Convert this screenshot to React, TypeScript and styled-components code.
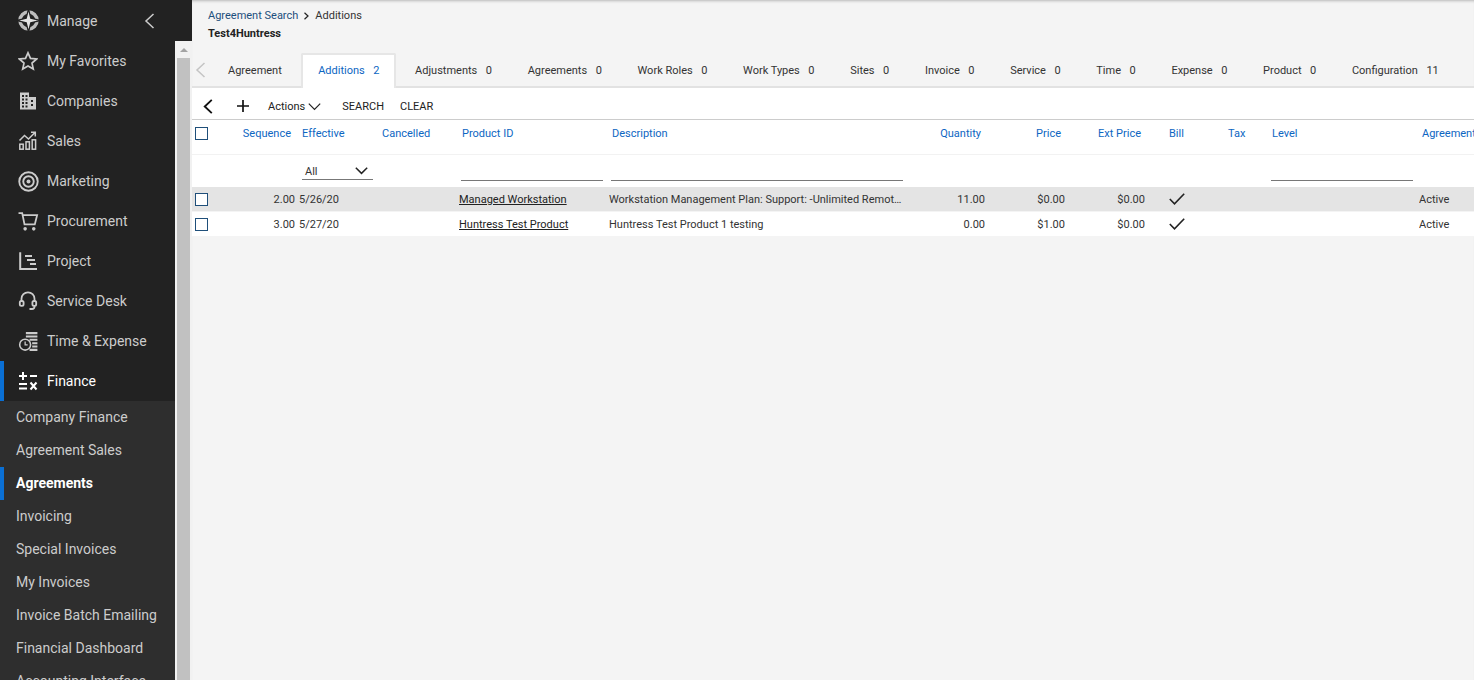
import React from "react"
import styled, { createGlobalStyle } from "styled-components"

const GlobalStyle = createGlobalStyle`
  html, body {
    margin: 0;
    height: 100%;
    overflow: hidden;
    background: #f4f4f4;
    font-family: Roboto, "Liberation Sans", sans-serif;
  }
`

const Page = styled.div`
  display: flex;
  width: 1474px;
  height: 680px;
  overflow: hidden;
`
const Sidebar = styled.aside`
  width: 192px;
  flex: none;
  display: flex;
  flex-direction: column;
  height: 680px;
  overflow: hidden;
`
const ManageBar = styled.div`
  height: 41px;
  flex: none;
  background: #222222;
  display: flex;
  align-items: center;
  justify-content: space-between;
  padding-right: 34px;
`
const SideBody = styled.div`
  flex: 1;
  min-height: 0;
  display: flex;
`
const SideList = styled.nav`
  width: 175px;
  flex: none;
  background: #222222;
  overflow: hidden;
`
const MainItem = styled.div<{ $active?: boolean }>`
  position: relative;
  height: 40px;
  display: flex;
  align-items: center;
  font-size: 14px;
  color: ${(p) => (p.$active ? "#ffffff" : "#cccccc")};
  &::before {
    content: "";
    display: ${(p) => (p.$active ? "block" : "none")};
    position: absolute;
    left: 0;
    top: 0;
    bottom: 0;
    width: 4px;
    background: #0a6fd4;
  }
`
const IconSlot = styled.span`
  width: 47px;
  flex: none;
  display: flex;
  justify-content: center;
  padding-left: 9px;
  box-sizing: border-box;
  svg {
    display: block;
  }
`
const SubList = styled.div`
  background: #2e2e2e;
  padding-bottom: 40px;
`
const SubItem = styled.div<{ $active?: boolean }>`
  position: relative;
  height: 33px;
  line-height: 33px;
  padding-left: 16px;
  font-size: 14px;
  white-space: nowrap;
  color: ${(p) => (p.$active ? "#ffffff" : "#cccccc")};
  font-weight: ${(p) => (p.$active ? 700 : 400)};
  &::before {
    content: "";
    display: ${(p) => (p.$active ? "block" : "none")};
    position: absolute;
    left: 0;
    top: 0;
    bottom: 0;
    width: 4px;
    background: #0a6fd4;
  }
`
const ScrollTrack = styled.div`
  width: 17px;
  flex: none;
  background: #f1f1f1;
  display: flex;
  flex-direction: column;
  align-items: center;
`
const ScrollArrow = styled.div`
  height: 17px;
  flex: none;
  display: flex;
  align-items: center;
  justify-content: center;
  &::after {
    content: "";
    border-left: 4px solid transparent;
    border-right: 4px solid transparent;
    border-bottom: 4px solid #a3a3a3;
  }
`
const ScrollThumb = styled.div`
  width: 13px;
  flex: 1;
  background: #c1c1c1;
`

const Main = styled.main`
  flex: 1;
  min-width: 0;
  background: #f4f4f4;
  box-shadow: inset 0 3px 3px -2px rgba(0, 0, 0, 0.25);
  color: #333333;
  font-size: 11px;
  overflow: hidden;
`
const Crumbs = styled.div`
  height: 54px;
  box-sizing: border-box;
  padding: 9px 0 0 16px;
`
const CrumbLine = styled.div`
  display: flex;
  align-items: center;
  gap: 5px;
  height: 13px;
  line-height: 13px;
`
const CrumbLink = styled.span`
  color: #1d4f7c;
`
const Title = styled.div`
  margin-top: 5px;
  line-height: 13px;
  font-weight: 700;
  color: #222222;
`
const TabBar = styled.div`
  height: 32px;
  display: flex;
  border-bottom: 2px solid #e2e2e2;
  white-space: nowrap;
`
const TabBack = styled.div`
  width: 18.15px;
  flex: none;
  display: flex;
  align-items: center;
  padding-left: 1px;
  box-sizing: border-box;
`
const Tab = styled.div<{ $active?: boolean }>`
  flex: none;
  height: 32px;
  box-sizing: border-box;
  display: flex;
  align-items: center;
  gap: 8.5px;
  padding: 0 17.85px;
  ${(p) =>
    p.$active &&
    `
    height: 35px;
    width: 95px;
    margin: -1px 1.15px 0 1.5px;
    padding: 0 0 2px 15px;
    color: #0d66c2;
    background: #ffffff;
    border: 2px solid #e6e6e6;
    border-bottom: none;
    border-radius: 2px 2px 0 0;
    position: relative;
    z-index: 1;
  `}
`
const Toolbar = styled.div`
  height: 32px;
  box-sizing: border-box;
  background: #ffffff;
  border-bottom: 1px solid #cccccc;
  display: flex;
  align-items: center;
  padding: 5px 0 0 9px;
  color: #222222;
`
const ToolIcon = styled.span<{ $gap: number }>`
  display: flex;
  margin-right: ${(p) => p.$gap}px;
`
const ToolText = styled.span<{ $gap?: number }>`
  display: flex;
  align-items: center;
  gap: 3px;
  margin-right: ${(p) => p.$gap ?? 0}px;
`
const COLS = "47px 60px 80px 80px 150px 300px 80px 80px 80px 76px 44px 150px 120px"
const HeadRow = styled.div`
  display: grid;
  grid-template-columns: ${COLS};
  height: 35px;
  box-sizing: border-box;
  padding-bottom: 8px;
  background: #ffffff;
  border-bottom: 1px solid #f2f2f2;
  align-items: center;
`
const HeadCell = styled.div<{ $right?: boolean; $inset?: number }>`
  color: #0d66c2;
  white-space: nowrap;
  text-align: ${(p) => (p.$right ? "right" : "left")};
  padding: ${(p) => (p.$right ? "0 8px 0 0" : `0 0 0 ${p.$inset ?? 3}px`)};
`
const FilterRow = styled.div`
  display: grid;
  grid-template-columns: ${COLS};
  height: 32px;
  background: #ffffff;
`
const FilterLine = styled.div`
  height: 25px;
  margin: 0 6px 0 2px;
  border-bottom: 1px solid #777777;
`
const FilterSelect = styled.div`
  height: 25px;
  margin: -1px 6px 0 3px;
  border-bottom: 1px solid #777777;
  display: flex;
  align-items: center;
  justify-content: space-between;
  padding: 0 5px 0 3px;
  white-space: nowrap;
  svg {
    margin-top: 7px;
  }
`
const AllLabel = styled.span`
  line-height: 13px;
  margin-top: 9px;
`
const DataRow = styled.div<{ $shade?: boolean }>`
  display: grid;
  grid-template-columns: ${COLS};
  height: 25px;
  box-sizing: border-box;
  align-items: center;
  background: ${(p) => (p.$shade ? "#e4e4e4" : "#ffffff")};
  border-bottom: 1px solid #f4f4f4;
`
const Cell = styled.div<{ $right?: boolean; $inset?: number }>`
  white-space: nowrap;
  overflow: hidden;
  text-overflow: ellipsis;
  text-align: ${(p) => (p.$right ? "right" : "left")};
  padding: ${(p) => (p.$right ? "0 4px 0 0" : `0 6px 0 ${p.$inset ?? 0}px`)};
  display: block;
`
const ProductLink = styled.span`
  color: #222222;
  text-decoration: underline;
`
const CheckBox = styled.span`
  display: block;
  width: 13px;
  height: 13px;
  margin-left: 3px;
  box-sizing: border-box;
  background: #ffffff;
  border: 1.5px solid #1f4f7a;
`
const BillCheck = styled.svg`
  display: block;
`

const Ico = ({ children, w = 20 }: { children: React.ReactNode; w?: number }) => (
  <svg
    width={w}
    height={w}
    viewBox="0 0 20 20"
    fill="none"
    stroke="#cccccc"
    strokeWidth="1.5"
  >
    {children}
  </svg>
)

const ManageIcon = () => (
  <Ico w={23}>
    <circle cx="10" cy="10" r="7.4" strokeWidth="3" stroke="#bdbdbd" />
    <path
      d="M10 0 L12 8 L20 10 L12 12 L10 20 L8 12 L0 10 L8 8 Z"
      fill="#e4e4e4"
      stroke="#222222"
      strokeWidth="1.1"
    />
  </Ico>
)
const StarIcon = () => (
  <Ico>
    <path d="M10 1.8 L12.5 7.4 L18.6 8 L14 12.1 L15.3 18.1 L10 15 L4.7 18.1 L6 12.1 L1.4 8 L7.5 7.4 Z" strokeWidth="1.7" />
  </Ico>
)
const BuildingIcon = () => (
  <Ico>
    <path
      fillRule="evenodd"
      clipRule="evenodd"
      stroke="none"
      fill="#cccccc"
      d="M2 1.5 H11 V6 H18 V18.5 H2 Z M4 4 V6 H6 V4 Z M7.5 4 V6 H9.5 V4 Z M4 7.5 V9.5 H6 V7.5 Z M7.5 7.5 V9.5 H9.5 V7.5 Z M4 11 V13 H6 V11 Z M7.5 11 V13 H9.5 V11 Z M4 14.5 V16.5 H6 V14.5 Z M7.5 14.5 V16.5 H9.5 V14.5 Z M13 9 V11 H15 V9 Z M13 13 V15 H15 V13 Z"
    />
  </Ico>
)
const SalesIcon = () => (
  <Ico>
    <path d="M1.5 9.5 L6.5 4.5 L10.5 8 L17 1.5 M13 1.2 H17.3 V5.5" />
    <rect x="1.8" y="13.2" width="3.4" height="5" />
    <rect x="8" y="10.8" width="3.4" height="7.4" />
    <rect x="14.2" y="8.8" width="3.4" height="9.4" />
  </Ico>
)
const TargetIcon = () => (
  <Ico w={21}>
    <circle cx="10" cy="10" r="8.8" strokeWidth="1.8" />
    <circle cx="10" cy="10" r="5" strokeWidth="1.8" />
    <circle cx="10" cy="10" r="1.9" fill="#cccccc" stroke="none" />
  </Ico>
)
const CartIcon = () => (
  <Ico w={21}>
    <path d="M0.5 2 H4 L6.2 12.8 H16 L18.2 4 H4.5" strokeWidth="1.7" />
    <circle cx="6.8" cy="17" r="1.7" fill="#cccccc" stroke="none" />
    <circle cx="15" cy="17" r="1.7" fill="#cccccc" stroke="none" />
  </Ico>
)
const ProjectIcon = () => (
  <Ico>
    <path d="M2.2 1.2 V18 H19 M7 5 H14 M9 9 H17 M12 13 H18" strokeWidth="2" />
  </Ico>
)
const HeadsetIcon = () => (
  <Ico>
    <path d="M3.5 11 V7.8 a6.5 6.5 0 0 1 13 0 V11 M16.5 14.5 V15.5 a2.5 2.5 0 0 1 -2.5 2.5 H11.5" strokeWidth="1.8" />
    <rect x="1.8" y="10" width="3.8" height="4.8" rx="1.6" strokeWidth="1.8" />
    <rect x="14.4" y="10" width="3.8" height="4.8" rx="1.6" strokeWidth="1.8" />
  </Ico>
)
const TimeIcon = () => (
  <Ico w={21}>
    <path d="M7.5 2 H18.5 M7.5 5.2 H18.5 M11 8.4 H18.5 M13.5 11.6 H18.5 M13.5 14.8 H18.5 M11 18 H18.5" strokeWidth="2" />
    <circle cx="6.8" cy="13" r="5.2" strokeWidth="1.5" />
    <path d="M6.8 10 V13.2 H9.2" strokeWidth="1.2" />
  </Ico>
)
const FinanceIcon = () => (
  <Ico>
    <g stroke="#ffffff" strokeWidth="2">
      <path d="M1 5 H9 M5 1 V9 M12 5 H19 M1 13 H9 M1 17.5 H9 M12.5 11.5 L18.5 18.5 M18.5 11.5 L12.5 18.5" />
    </g>
  </Ico>
)

const Chevron = ({ dir, size, color, width = 1.5 }: { dir: "left" | "down"; size: number; color: string; width?: number }) => (
  <svg width={size} height={size} viewBox="0 0 16 16" fill="none" stroke={color} strokeWidth={width}>
    <path d={dir === "left" ? "M11.5 1 L4 8 L11.5 15" : "M1 4.5 L8 11.5 L15 4.5"} />
  </svg>
)

const mainItems = [
  { label: "My Favorites", icon: <StarIcon /> },
  { label: "Companies", icon: <BuildingIcon /> },
  { label: "Sales", icon: <SalesIcon /> },
  { label: "Marketing", icon: <TargetIcon /> },
  { label: "Procurement", icon: <CartIcon /> },
  { label: "Project", icon: <ProjectIcon /> },
  { label: "Service Desk", icon: <HeadsetIcon /> },
  { label: "Time & Expense", icon: <TimeIcon /> },
  { label: "Finance", icon: <FinanceIcon />, active: true },
]
const subItems = [
  "Company Finance",
  "Agreement Sales",
  "Agreements",
  "Invoicing",
  "Special Invoices",
  "My Invoices",
  "Invoice Batch Emailing",
  "Financial Dashboard",
  "Accounting Interface",
]
const tabs = [
  { label: "Agreement" },
  { label: "Additions", count: 2, active: true },
  { label: "Adjustments", count: 0 },
  { label: "Agreements", count: 0 },
  { label: "Work Roles", count: 0 },
  { label: "Work Types", count: 0 },
  { label: "Sites", count: 0 },
  { label: "Invoice", count: 0 },
  { label: "Service", count: 0 },
  { label: "Time", count: 0 },
  { label: "Expense", count: 0 },
  { label: "Product", count: 0 },
  { label: "Configuration", count: 11 },
]
const rows = [
  {
    seq: "2.00",
    date: "5/26/20",
    product: "Managed Workstation",
    desc: "Workstation Management Plan: Support: -Unlimited Remote Support",
    qty: "11.00",
    price: "$0.00",
    ext: "$0.00",
  },
  {
    seq: "3.00",
    date: "5/27/20",
    product: "Huntress Test Product",
    desc: "Huntress Test Product 1 testing",
    qty: "0.00",
    price: "$1.00",
    ext: "$0.00",
  },
]

function App() {
  return (
    <Page>
      <GlobalStyle />
      <Sidebar>
        <ManageBar>
          <MainItem>
            <IconSlot>
              <ManageIcon />
            </IconSlot>
            Manage
          </MainItem>
          <Chevron dir="left" size={16} color="#cccccc" />
        </ManageBar>
        <SideBody>
          <SideList>
            {mainItems.map((item) => (
              <MainItem key={item.label} $active={item.active}>
                <IconSlot>{item.icon}</IconSlot>
                {item.label}
              </MainItem>
            ))}
            <SubList>
              {subItems.map((s) => (
                <SubItem key={s} $active={s === "Agreements"}>
                  {s}
                </SubItem>
              ))}
            </SubList>
          </SideList>
          <ScrollTrack>
            <ScrollArrow />
            <ScrollThumb />
          </ScrollTrack>
        </SideBody>
      </Sidebar>
      <Main>
        <Crumbs>
          <CrumbLine>
            <CrumbLink>Agreement Search</CrumbLink>
            <svg width="7" height="8" viewBox="0 0 7 8" fill="none" stroke="#222222" strokeWidth="1.2">
              <path d="M1.5 0.8 L5 4 L1.5 7.2" />
            </svg>
            <span>Additions</span>
          </CrumbLine>
          <Title>Test4Huntress</Title>
        </Crumbs>
        <TabBar>
          <TabBack>
            <Chevron dir="left" size={16} color="#c4c4c4" />
          </TabBack>
          {tabs.map((t) => (
            <Tab key={t.label} $active={t.active}>
              <span>{t.label}</span>
              {t.count !== undefined && <span>{t.count}</span>}
            </Tab>
          ))}
        </TabBar>
        <Toolbar>
          <ToolIcon $gap={21}>
            <Chevron dir="left" size={15} color="#111111" width={2} />
          </ToolIcon>
          <ToolIcon $gap={19}>
            <svg width="12" height="12" viewBox="0 0 12 12" stroke="#111111" strokeWidth="1.7">
              <path d="M6 0 V12 M0 6 H12" />
            </svg>
          </ToolIcon>
          <ToolText $gap={21}>
            Actions
            <Chevron dir="down" size={13} color="#222222" />
          </ToolText>
          <ToolText $gap={16}>SEARCH</ToolText>
          <ToolText>CLEAR</ToolText>
        </Toolbar>
        <HeadRow>
          <CheckBox />
          <HeadCell $right>Sequence</HeadCell>
          <HeadCell>Effective</HeadCell>
          <HeadCell>Cancelled</HeadCell>
          <HeadCell>Product ID</HeadCell>
          <HeadCell>Description</HeadCell>
          <HeadCell $right>Quantity</HeadCell>
          <HeadCell $right>Price</HeadCell>
          <HeadCell $right>Ext Price</HeadCell>
          <HeadCell $inset={20}>Bill</HeadCell>
          <HeadCell>Tax</HeadCell>
          <HeadCell>Level</HeadCell>
          <HeadCell>Agreement Status</HeadCell>
        </HeadRow>
        <FilterRow>
          <div />
          <div />
          <FilterSelect>
            <AllLabel>All</AllLabel>
            <Chevron dir="down" size={13} color="#222222" width={1.8} />
          </FilterSelect>
          <div />
          <FilterLine />
          <FilterLine />
          <div />
          <div />
          <div />
          <div />
          <div />
          <FilterLine />
          <div />
        </FilterRow>
        {rows.map((r, i) => (
          <DataRow key={r.seq} $shade={i === 0}>
            <CheckBox />
            <Cell $right>{r.seq}</Cell>
            <Cell>{r.date}</Cell>
            <Cell />
            <Cell>
              <ProductLink>{r.product}</ProductLink>
            </Cell>
            <Cell>{r.desc}</Cell>
            <Cell $right>{r.qty}</Cell>
            <Cell $right>{r.price}</Cell>
            <Cell $right>{r.ext}</Cell>
            <Cell $inset={20}>
              <BillCheck width="16" height="12" viewBox="0 0 16 12" fill="none" stroke="#222222" strokeWidth="1.6">
                <path d="M0.8 6 L5.5 10.8 L15.2 0.8" />
              </BillCheck>
            </Cell>
            <Cell />
            <Cell />
            <Cell>Active</Cell>
          </DataRow>
        ))}
      </Main>
    </Page>
  )
}

export default App
